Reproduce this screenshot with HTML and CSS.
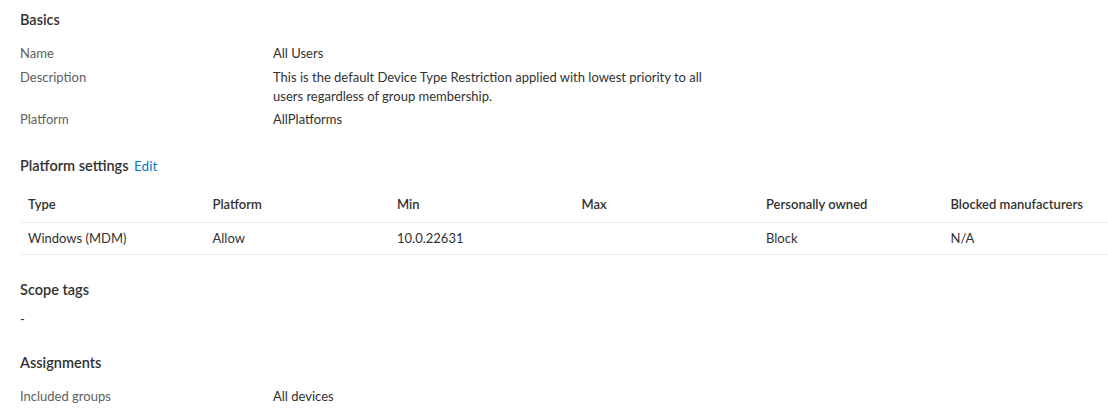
FILE: index.html
```html
<!DOCTYPE html>
<html lang="en">
<head>
<meta charset="utf-8">
<title>All Users - Properties</title>
<link rel="stylesheet" href="styles.css">
</head>
<body>
<main class="page">
  <section class="section basics">
    <h2 class="heading">Basics</h2>
    <dl class="props">
      <dt class="label">Name</dt>
      <dd class="value">All Users</dd>
      <dt class="label">Description</dt>
      <dd class="value">This is the default Device Type Restriction applied with lowest priority to all users regardless of group membership.</dd>
      <dt class="label">Platform</dt>
      <dd class="value">AllPlatforms</dd>
    </dl>
  </section>

  <section class="section platform">
    <h2 class="heading">Platform settings <a class="edit" href="#">Edit</a></h2>
    <div class="table">
      <div class="row head">
        <div class="cell">Type</div>
        <div class="cell">Platform</div>
        <div class="cell">Min</div>
        <div class="cell">Max</div>
        <div class="cell">Personally owned</div>
        <div class="cell">Blocked manufacturers</div>
      </div>
      <div class="row body">
        <div class="cell">Windows (MDM)</div>
        <div class="cell">Allow</div>
        <div class="cell">10.0.22631</div>
        <div class="cell"></div>
        <div class="cell">Block</div>
        <div class="cell">N/A</div>
      </div>
    </div>
  </section>

  <section class="section scope">
    <h2 class="heading">Scope tags</h2>
    <p class="plain">-</p>
  </section>

  <section class="section assignments">
    <h2 class="heading">Assignments</h2>
    <dl class="props">
      <dt class="label">Included groups</dt>
      <dd class="value">All devices</dd>
    </dl>
  </section>
</main>
</body>
</html>
```

FILE: styles.css
```css
html, body {
  margin: 0;
  padding: 0;
  background: #ffffff;
}

body {
  font-family: Lato, "Noto Sans", sans-serif;
  font-size: 13px;
  line-height: 19px;
  color: #323130;
  overflow: hidden;
}

.page {
  padding: 10px 0 0 20px;
}

.heading {
  margin: 0;
  font-size: 14.5px;
  line-height: 20px;
  font-weight: 600;
  color: #323130;
}

.edit {
  font-size: 13.5px;
  font-weight: 400;
  color: #0078d4;
  text-decoration: none;
  margin-left: 2px;
}

.props {
  margin: 14px 0 0 0;
  display: grid;
  grid-template-columns: 253px 440px;
  row-gap: 4.5px;
}

.label {
  margin: 0;
  color: #605e5c;
}

.value {
  margin: 0;
  color: #323130;
}

.platform {
  margin-top: 27px;
}

.table {
  margin-top: 11px;
  width: 1107px;
}

.row {
  display: grid;
  grid-template-columns: repeat(6, 184.5px);
  border-bottom: 1px solid #edebe9;
}

.row.head {
  height: 35px;
  align-items: center;
  font-weight: 600;
  color: #323130;
}

.row.body {
  height: 31px;
  align-items: center;
  color: #323130;
}

.cell {
  padding: 0 8px;
  white-space: nowrap;
}

.scope {
  margin-top: 25px;
}

.plain {
  margin: 10px 0 0 0;
}

.assignments {
  margin-top: 24px;
}
```
